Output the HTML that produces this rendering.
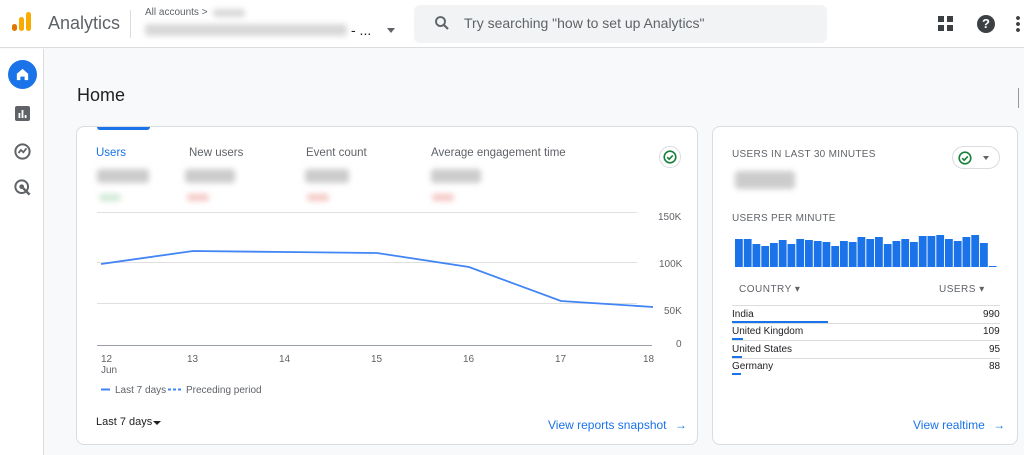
<!DOCTYPE html>
<html><head><meta charset="utf-8"><style>
*{box-sizing:border-box;margin:0;padding:0}
body{width:1024px;height:455px;overflow:hidden;background:#f8f9fa;font-family:"Liberation Sans",Arial,sans-serif;color:#202124;position:relative}
.abs{position:absolute}
.top{position:absolute;left:0;top:0;width:1024px;height:48px;background:#fff;border-bottom:1px solid #dadce0}
.side{position:absolute;left:0;top:49px;width:44px;height:406px;background:#fff;border-right:1px solid #dadce0}
.card{position:absolute;background:#fff;border:1px solid #dadce0;border-radius:8px}
.blur{position:absolute;background:#d8d8d8;filter:blur(3px);border-radius:3px}
</style></head><body>
<div class="top">
 <div class="abs" style="left:12px;top:24px;width:5px;height:7px;background:#e37400;border-radius:3px"></div>
 <div class="abs" style="left:19px;top:17px;width:5px;height:14px;background:#f9ab00;border-radius:3px"></div>
 <div class="abs" style="left:26px;top:12px;width:5px;height:19px;background:#f9ab00;border-radius:3px"></div>
 <div class="abs" style="left:48px;top:13px;font-size:18px;color:#5f6368">Analytics</div>
 <div class="abs" style="left:130px;top:10px;width:1px;height:28px;background:#dadce0"></div>
 <div class="abs" style="left:145px;top:7px;font-size:10px;color:#5f6368">All accounts &gt;</div>
 <div class="blur" style="left:213px;top:9px;width:32px;height:8px"></div>
 <div class="blur" style="left:145px;top:24px;width:202px;height:12px"></div>
 <div class="abs" style="left:351px;top:22px;font-size:14px;color:#202124">- ...</div>
 <div class="abs" style="left:387px;top:28px;border:4px solid transparent;border-top:5px solid #5f6368"></div>
 <div class="abs" style="left:414px;top:5px;width:413px;height:38px;background:#f1f3f4;border-radius:6px"></div>
 <svg class="abs" style="left:433px;top:14px" width="18" height="18" viewBox="0 0 24 24"><circle cx="10" cy="10" r="6" fill="none" stroke="#5f6368" stroke-width="2.5"/><path d="M14.5 14.5L20 20" stroke="#5f6368" stroke-width="2.8"/></svg>
 <div class="abs" style="left:464px;top:15px;font-size:14px;color:#5f6368">Try searching "how to set up Analytics"</div>
 <svg class="abs" style="left:938px;top:16px" width="16" height="16"><rect x="0" y="0" width="6" height="6" fill="#3c4043"/><rect x="9" y="0" width="6" height="6" fill="#3c4043"/><rect x="0" y="9" width="6" height="6" fill="#3c4043"/><rect x="9" y="9" width="6" height="6" fill="#3c4043"/></svg>
 <div class="abs" style="left:977px;top:15px;width:18px;height:18px;border-radius:50%;background:#3c4043;color:#fff;font-size:13px;font-weight:bold;text-align:center;line-height:18px">?</div>
 <div class="abs" style="left:1016px;top:15px;width:4px;height:18px;background:radial-gradient(circle,#3c4043 1.8px,transparent 2px) 0 0/4px 6px"></div>
</div>
<div class="side">
 <div class="abs" style="left:8px;top:11px;width:29px;height:29px;border-radius:50%;background:#1a73e8"></div>
 <svg class="abs" style="left:14px;top:17px" width="17" height="17" viewBox="0 0 24 24"><path d="M4 11L12 4l8 7v9h-5v-5h-6v5H4z" fill="#fff"/></svg>
 <svg class="abs" style="left:15px;top:57px" width="15" height="15"><rect width="15" height="15" rx="2" fill="#5f6368"/><rect x="3.5" y="7" width="1.8" height="5" fill="#fff"/><rect x="6.6" y="4" width="1.8" height="8" fill="#fff"/><rect x="9.7" y="9" width="1.8" height="3" fill="#fff"/></svg>
 <svg class="abs" style="left:13px;top:93px" width="19" height="19" viewBox="0 0 24 24"><circle cx="12" cy="12" r="9" fill="none" stroke="#5f6368" stroke-width="2.5"/><path d="M7 14l3-4 3 3 4-5" fill="none" stroke="#5f6368" stroke-width="2.2"/></svg>
 <svg class="abs" style="left:13px;top:129px" width="19" height="19" viewBox="0 0 24 24"><circle cx="11" cy="11" r="8" fill="none" stroke="#5f6368" stroke-width="2.5"/><circle cx="11" cy="11" r="3" fill="#5f6368"/><path d="M13 13l8 8" stroke="#5f6368" stroke-width="3"/></svg>
</div>
<div class="abs" style="left:77px;top:85px;font-size:18px;color:#202124">Home</div>
<div class="abs" style="left:1018px;top:88px;width:1px;height:20px;background:#999"></div>

<div class="card" style="left:76px;top:126px;width:622px;height:319px">
 <div class="abs" style="left:20px;top:0;width:53px;height:3px;background:#1a73e8;border-radius:0 0 3px 3px"></div>
 <div class="abs" style="left:19px;top:20px;font-size:11.5px;color:#1a73e8">Users</div>
 <div class="abs" style="left:112px;top:20px;font-size:11.5px;color:#5f6368">New users</div>
 <div class="abs" style="left:229px;top:20px;font-size:11.5px;color:#5f6368">Event count</div>
 <div class="abs" style="left:354px;top:20px;font-size:11.5px;color:#5f6368">Average engagement time</div>
 <div class="blur" style="left:20px;top:42px;width:52px;height:14px;background:#ccc"></div>
 <div class="blur" style="left:108px;top:42px;width:50px;height:14px;background:#ccc"></div>
 <div class="blur" style="left:228px;top:42px;width:44px;height:14px;background:#ccc"></div>
 <div class="blur" style="left:354px;top:42px;width:50px;height:14px;background:#ccc"></div>
 <div class="blur" style="left:22px;top:67px;width:22px;height:7px;background:#cfe8d5"></div>
 <div class="blur" style="left:110px;top:67px;width:22px;height:7px;background:#f4c7c3"></div>
 <div class="blur" style="left:230px;top:67px;width:22px;height:7px;background:#f4c7c3"></div>
 <div class="blur" style="left:355px;top:67px;width:22px;height:7px;background:#f4c7c3"></div>
 <div class="abs" style="left:582px;top:19px;width:22px;height:22px;border-radius:50%;border:1px solid #dadce0"></div>
 <svg class="abs" style="left:586px;top:23px" width="14" height="14" viewBox="0 0 14 14"><circle cx="7" cy="7" r="5.8" fill="none" stroke="#188038" stroke-width="1.6"/><path d="M4.2 7.2l2 2 3.6-3.8" fill="none" stroke="#188038" stroke-width="1.6"/></svg>
 <svg class="abs" style="left:0;top:0" width="622" height="319">
  <g stroke="#e0e0e0" stroke-width="1"><line x1="20" y1="85.5" x2="560" y2="85.5"/><line x1="20" y1="135.5" x2="560" y2="135.5"/><line x1="20" y1="176.5" x2="560" y2="176.5"/><line x1="20" y1="218.5" x2="575" y2="218.5" stroke="#9aa0a6"/></g>
  <polyline points="24,137 116,124 208,125 300,126 392,140 484,174 576,180" fill="none" stroke="#4285f4" stroke-width="1.8"/>
  <g font-size="10" fill="#5f6368" font-family="Liberation Sans"><text x="581" y="93">150K</text><text x="582" y="140">100K</text><text x="587" y="187">50K</text><text x="599" y="220">0</text>
  <text x="24" y="235">12</text><text x="24" y="246">Jun</text><text x="110" y="235">13</text><text x="202" y="235">14</text><text x="294" y="235">15</text><text x="386" y="235">16</text><text x="478" y="235">17</text><text x="566" y="235">18</text>
  <text x="38" y="266">Last 7 days</text><text x="109" y="266">Preceding period</text></g>
  <line x1="24" y1="262.5" x2="33" y2="262.5" stroke="#4285f4" stroke-width="2"/>
  <line x1="91" y1="262.5" x2="104" y2="262.5" stroke="#4285f4" stroke-width="2" stroke-dasharray="3,2"/>
 </svg>
 <div class="abs" style="left:19px;top:289px;font-size:11px;color:#202124">Last 7 days</div>
 <div class="abs" style="left:76px;top:294px;border:4px solid transparent;border-top:4px solid #202124"></div>
 <div class="abs" style="left:471px;top:291px;font-size:12px;color:#1a73e8;white-space:nowrap">View reports snapshot <span style="margin-left:5px">→</span></div>
</div>

<div class="card" style="left:712px;top:126px;width:306px;height:319px">
 <div class="abs" style="left:19px;top:22px;font-size:10px;color:#5f6368;letter-spacing:.3px">USERS IN LAST 30 MINUTES</div>
 <div class="abs" style="left:239px;top:19px;width:48px;height:23px;border-radius:12px;border:1px solid #dadce0"></div>
 <svg class="abs" style="left:245px;top:24px" width="14" height="14" viewBox="0 0 14 14"><circle cx="7" cy="7" r="5.8" fill="none" stroke="#188038" stroke-width="1.6"/><path d="M4.2 7.2l2 2 3.6-3.8" fill="none" stroke="#188038" stroke-width="1.6"/></svg>
 <div class="abs" style="left:270px;top:29px;border:3px solid transparent;border-top:4px solid #5f6368"></div>
 <div class="blur" style="left:22px;top:44px;width:60px;height:18px;background:#ccc"></div>
 <div class="abs" style="left:19px;top:86px;font-size:10px;color:#5f6368;letter-spacing:.3px">USERS PER MINUTE</div>
 <svg class="abs" style="left:22px;top:100px" width="270" height="42">
  <g fill="#1a73e8" id="bars"></g>
 </svg>
 <div class="abs" style="left:26px;top:157px;font-size:10px;color:#5f6368;letter-spacing:.5px">COUNTRY ▾</div>
 <div class="abs" style="left:226px;top:157px;font-size:10px;color:#5f6368;letter-spacing:.5px">USERS ▾</div>
 <div class="abs" style="left:19px;top:178px;width:268px;height:1px;background:#dadce0"></div>
 <div class="abs" style="left:19px;top:182px;font-size:10px">India</div><div class="abs" style="left:270px;top:182px;font-size:10px">990</div>
 <div class="abs" style="left:19px;top:194px;width:96px;height:2px;background:#1a73e8"></div>
 <div class="abs" style="left:19px;top:196px;width:268px;height:1px;background:#dadce0"></div>
 <div class="abs" style="left:19px;top:199px;font-size:10px">United Kingdom</div><div class="abs" style="left:270px;top:199px;font-size:10px">109</div>
 <div class="abs" style="left:19px;top:211px;width:11px;height:2px;background:#1a73e8"></div>
 <div class="abs" style="left:19px;top:213px;width:268px;height:1px;background:#dadce0"></div>
 <div class="abs" style="left:19px;top:217px;font-size:10px">United States</div><div class="abs" style="left:276px;top:217px;font-size:10px">95</div>
 <div class="abs" style="left:19px;top:229px;width:10px;height:2px;background:#1a73e8"></div>
 <div class="abs" style="left:19px;top:231px;width:268px;height:1px;background:#dadce0"></div>
 <div class="abs" style="left:19px;top:234px;font-size:10px">Germany</div><div class="abs" style="left:276px;top:234px;font-size:10px">88</div>
 <div class="abs" style="left:19px;top:246px;width:9px;height:2px;background:#1a73e8"></div>
 <div class="abs" style="left:200px;top:291px;font-size:12px;color:#1a73e8;white-space:nowrap">View realtime <span style="margin-left:5px">→</span></div>
</div>
<script>
var h=[28,28,23,21,24,27,23,28,27,26,25,21,26,25,30,28,30,23,26,28,25,31,31,32,28,26,30,32,24];
var g=document.getElementById('bars'),s='';
h.forEach(function(v,i){s+='<rect x="'+(i*8.75).toFixed(1)+'" y="'+(40-v)+'" width="7.8" height="'+v+'"/>';});
s+='<rect x="'+(29*8.75)+'" y="39" width="7.8" height="1"/>';
g.innerHTML=s;
</script>
</body></html>
